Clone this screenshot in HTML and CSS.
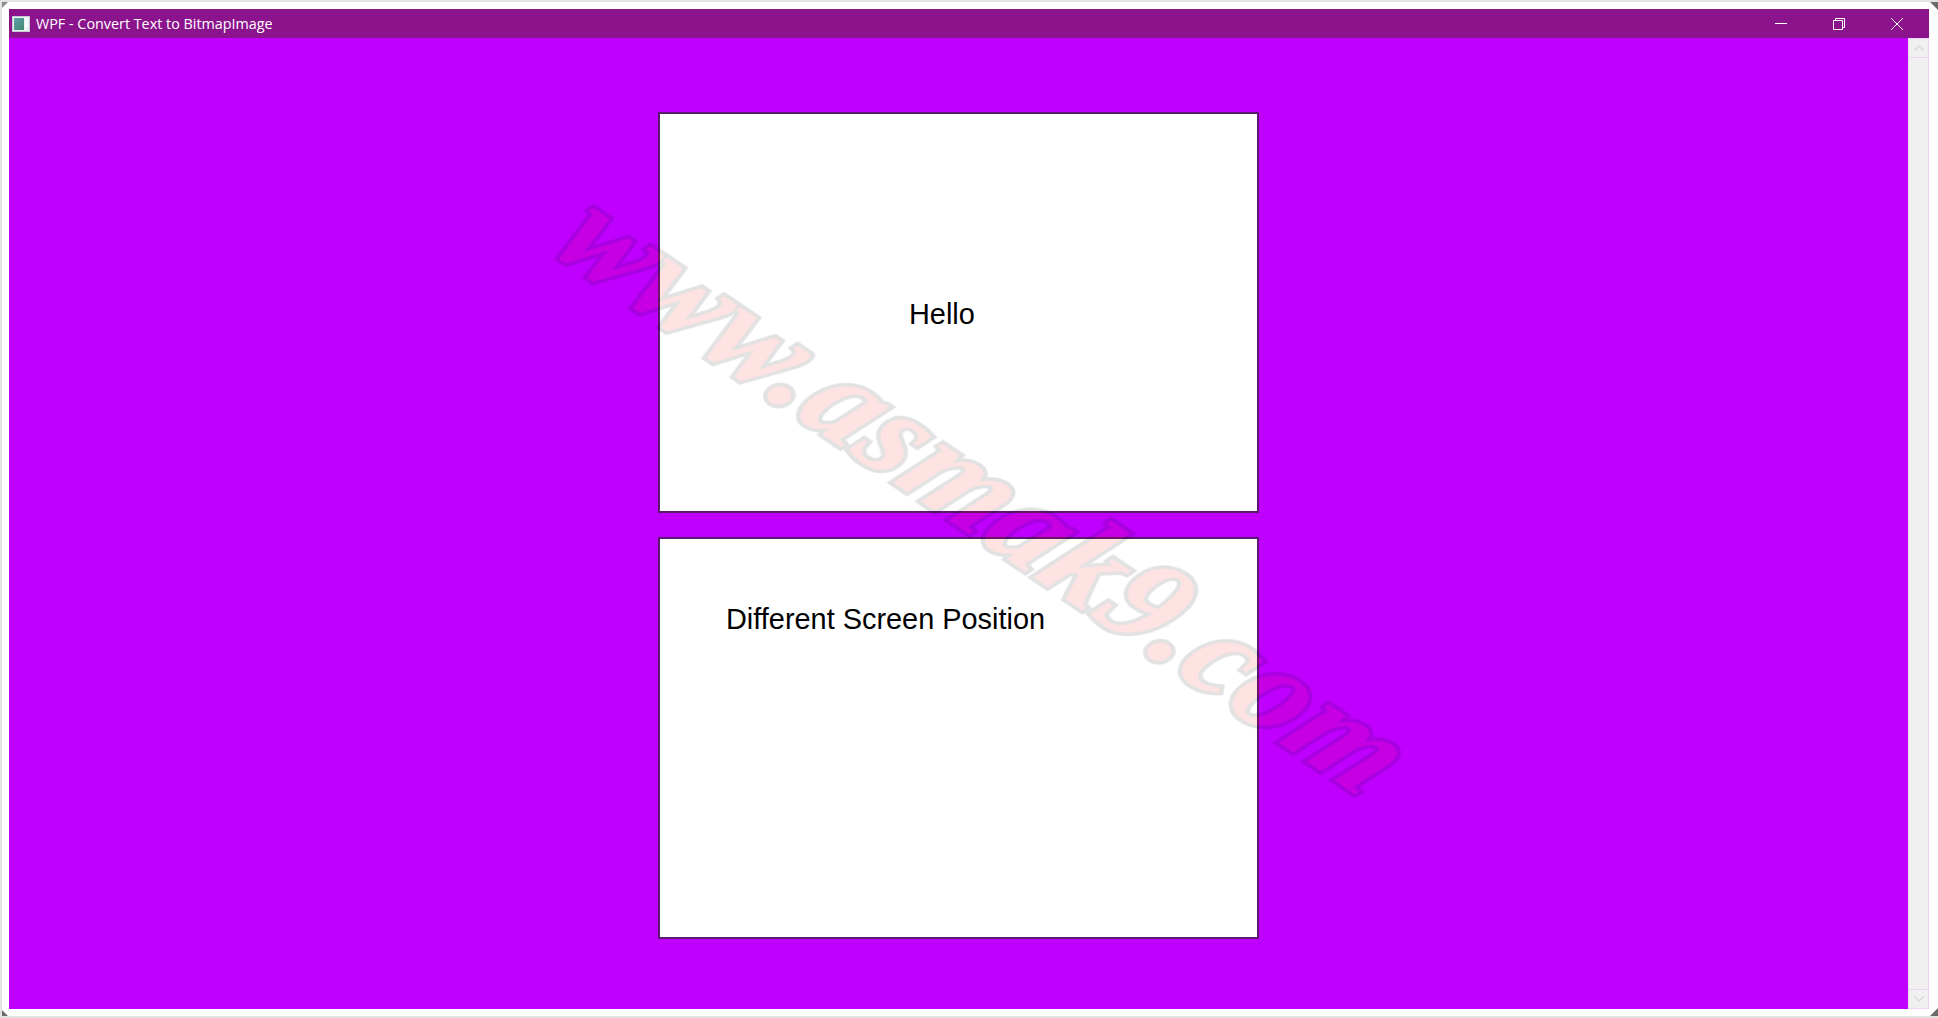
FILE: index.html
```html
<!DOCTYPE html>
<html lang="en">
<head>
<meta charset="utf-8">
<title>WPF - Convert Text to BitmapImage</title>
<link rel="stylesheet" href="styles.css">
</head>
<body>
<div class="frame">
  <span class="corner tl"></span><span class="corner tr"></span><span class="corner bl"></span><span class="corner br"></span>
  <div class="window">
    <header class="titlebar">
      <svg class="app-icon" viewBox="0 0 18 16" width="18" height="16" aria-hidden="true">
        <defs><linearGradient id="g" x1="0" y1="0" x2="1" y2="1"><stop offset="0" stop-color="#5f9fb4"/><stop offset="1" stop-color="#3f8a68"/></linearGradient></defs>
        <rect x="0.5" y="0.5" width="17" height="15" fill="#eef2f4" stroke="#c4ccd0"/>
        <rect x="2" y="2" width="10" height="12" fill="url(#g)"/>
        <rect x="13" y="2" width="3" height="9" fill="#fbfdfd"/>
      </svg>
      <span class="title">WPF - Convert Text to BitmapImage</span>
      <div class="controls">
        <span class="ctl"><svg viewBox="0 0 12 12" width="12" height="12" aria-hidden="true"><path d="M0 5.5h12" stroke="#fff" fill="none"/></svg></span>
        <span class="ctl"><svg viewBox="0 0 12 12" width="12" height="12" aria-hidden="true"><path d="M.5 2.5h9v9h-9zM2.5 2.5v-2h9v9h-2" stroke="#fff" fill="none"/></svg></span>
        <span class="ctl"><svg viewBox="0 0 12 12" width="12" height="12" aria-hidden="true"><path d="M0 0l12 12M12 0L0 12" stroke="#fff" fill="none"/></svg></span>
      </div>
    </header>
    <div class="body">
      <main class="canvas">
        <section class="panel"><span class="hello">Hello</span></section>
        <section class="panel second"><span class="diff">Different Screen Position</span></section>
      </main>
      <aside class="scrollbar">
        <span class="sb-btn up"><svg viewBox="0 0 10 6" width="10" height="6" aria-hidden="true"><path d="M.5 5.5L5 1l4.5 4.5" stroke="#dcdcdc" stroke-width="1.6" fill="none"/></svg></span>
        <span class="sb-track"></span>
        <span class="sb-btn down"><svg viewBox="0 0 10 6" width="10" height="6" aria-hidden="true"><path d="M.5 .5L5 5l4.5-4.5" stroke="#dcdcdc" stroke-width="1.6" fill="none"/></svg></span>
      </aside>
    </div>
  </div>
  <div class="watermark">www.asmak9.com</div>
</div>
</body>
</html>
```
FILE: styles.css
```css
* { box-sizing: border-box; }
html, body { margin: 0; height: 100%; overflow: hidden; background: #fff; }
.frame {
  position: relative;
  width: 1938px;
  height: 1018px;
  padding: 7px;
  border-top: 2px solid #e2e2e2;
  border-left: 2px solid #e2e2e2;
  border-bottom: 2px solid #e2e2e2;
  overflow: hidden;
}
.corner { position: absolute; width: 10px; height: 10px; background: #6a6a6a; }
.tl { left: -2px; top: -2px; background: #8a8a8a; clip-path: polygon(0 0, 100% 0, 0 100%); }
.tr { right: 0; top: -2px; clip-path: polygon(0 0, 100% 0, 100% 100%); }
.bl { left: -2px; bottom: -2px; clip-path: polygon(0 0, 100% 100%, 0 100%); }
.br { right: 0; bottom: -2px; clip-path: polygon(100% 0, 100% 100%, 0 100%); }
.window { width: 1920px; height: 1000px; display: flex; flex-direction: column; }
.titlebar {
  height: 29px;
  flex: none;
  background: #8b148d;
  display: flex;
  align-items: center;
  padding: 0 3px;
  color: #fff;
}
.app-icon { flex: none; margin-right: 6px; }
.title { font: 14.35px/29px "Open Sans", sans-serif; white-space: nowrap; }
.controls { margin-left: auto; display: flex; }
.ctl { width: 58px; height: 29px; display: flex; align-items: center; justify-content: center; }
.body { flex: 1; display: flex; min-height: 0; }
.canvas {
  flex: 1;
  background: #bf00ff;
  padding: 74px 0 0 649px;
  display: flex;
  flex-direction: column;
  gap: 24px;
}
.panel {
  width: 601px;
  height: 401px;
  flex: none;
  background: #fff;
  border: 2px solid #5a1a70;
  font: 28.9px/34px "Liberation Sans", Arial, sans-serif;
  color: #000;
  display: flex;
}
.second { height: 402px; }
.hello { margin: 183px 0 0 249px; }
.diff { margin: 63px 0 0 66px; }
.scrollbar { width: 21px; flex: none; background: #f0f0f0; display: flex; flex-direction: column; }
.sb-btn { height: 20px; flex: none; display: flex; align-items: center; justify-content: center; border: 1px solid #ead6f2; }
.sb-track { flex: 1; border: solid #ead6f2; border-width: 0 1px; }
.watermark {
  position: absolute;
  left: 628px;
  top: 172px;
  font: italic 700 130px/1 "Liberation Serif", serif;
  letter-spacing: 2px;
  white-space: nowrap;
  color: #ff0000;
  -webkit-text-stroke: 8px #000;
  paint-order: stroke fill;
  opacity: 0.11;
  filter: blur(0.6px);
  transform-origin: 0 0;
  transform: rotate(34deg) skewX(-14deg);
}
```
